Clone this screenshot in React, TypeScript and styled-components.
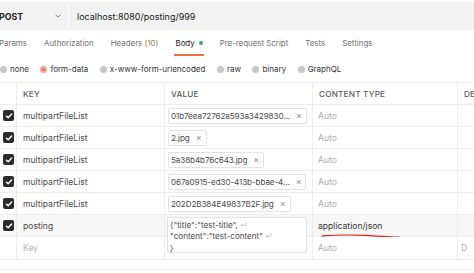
import React from "react"
import styled, { createGlobalStyle } from "styled-components"

const GlobalStyle = createGlobalStyle`
  html, body {
    margin: 0;
    padding: 0;
    background: #ffffff;
  }
  body {
    font-family: Inter, "Noto Sans", sans-serif;
    color: #212121;
    overflow: hidden;
  }
`

type Row = {
  key: string
  value?: string
  file?: boolean
  json?: string[]
  contentType?: string
  highlight?: boolean
}

const rows: Row[] = [
  { key: "multipartFileList", value: "01b7eea72762a593a3429830...", file: true },
  { key: "multipartFileList", value: "2.jpg", file: true },
  { key: "multipartFileList", value: "5a38b4b76c643.jpg", file: true },
  { key: "multipartFileList", value: "067a0915-ed30-413b-bbae-4...", file: true },
  { key: "multipartFileList", value: "202D2B384E49837B2F.jpg", file: true },
  {
    key: "posting",
    json: ['{"title":"test-title",', '"content":"test-content"', "}"],
    contentType: "application/json",
    highlight: true,
  },
]

const tabs = [
  { label: "Params" },
  { label: "Authorization" },
  { label: "Headers", count: "(10)" },
  { label: "Body", active: true },
  { label: "Pre-request Script" },
  { label: "Tests" },
  { label: "Settings" },
]

const bodyTypes = ["none", "form-data", "x-www-form-urlencoded", "raw", "binary", "GraphQL"]

const Check = () => (
  <CheckBox>
    <svg width="8" height="8" viewBox="0 0 10 10">
      <path d="M1.8 5.2 L4 7.3 L8.3 2.6" fill="none" stroke="#fff" strokeWidth="1.8" strokeLinecap="round" strokeLinejoin="round" />
    </svg>
  </CheckBox>
)

const App = () => {
  return (
    <Page>
      <GlobalStyle />
      <UrlBar>
        <Method>
          POST
          <svg width="8" height="8" viewBox="0 0 10 10">
            <path d="M2 3.5 L5 6.5 L8 3.5" fill="none" stroke="#6b6b6b" strokeWidth="1.1" />
          </svg>
        </Method>
        <Url>localhost:8080/posting/999</Url>
      </UrlBar>

      <Tabs>
        {tabs.map(tab => (
          <Tab key={tab.label} active={tab.active}>
            {tab.label}
            {tab.count && <Count> {tab.count}</Count>}
            {tab.active && <Dot />}
          </Tab>
        ))}
      </Tabs>

      <Radios>
        {bodyTypes.map(type => (
          <RadioItem key={type}>
            <Radio selected={type === "form-data"} />
            {type}
          </RadioItem>
        ))}
      </Radios>

      <Table>
        <HeaderRow>
          <Cell />
          <HeadCell>KEY</HeadCell>
          <HeadCell>VALUE</HeadCell>
          <HeadCell>CONTENT TYPE</HeadCell>
          <HeadCell>DE</HeadCell>
        </HeaderRow>
        {rows.map((row, i) => (
          <TableRow key={i} highlight={row.highlight}>
            <Cell>
              <Check />
            </Cell>
            <KeyCell>{row.key}</KeyCell>
            <ValueCell>
              {row.file && (
                <FileChip>
                  {row.value}
                  <Remove>×</Remove>
                </FileChip>
              )}
              {row.json && (
                <JsonBox>
                  {row.json.map((line, n) => (
                    <div key={line}>
                      {line}
                      {n < row.json!.length - 1 && <NewLine> ↵</NewLine>}
                    </div>
                  ))}
                </JsonBox>
              )}
            </ValueCell>
            <TypeCell muted={!row.contentType}>
              {row.contentType || "Auto"}
              {row.contentType && (
                <Scribble width="80" height="8" viewBox="0 0 80 8">
                  <path d="M1 3.8 C 12 3, 30 2.8, 45 3.4 S 70 5.4, 78 5" fill="none" stroke="#e0201b" strokeWidth="1.2" strokeLinecap="round" />
                </Scribble>
              )}
            </TypeCell>
            <Cell />
          </TableRow>
        ))}
        <TableRow>
          <Cell />
          <KeyCell muted>Key</KeyCell>
          <ValueCell />
          <TypeCell muted>Auto</TypeCell>
          <DescCell>D</DescCell>
        </TableRow>
      </Table>
      <Footer />
    </Page>
  )
}

const Page = styled.div`
  width: 474px;
  height: 273px;
  overflow: hidden;
  font-size: 8.6px;
`
const UrlBar = styled.div`
  display: flex;
  align-items: center;
  height: 28px;
  background: #f2f2f2;
  margin-top: 2px;
`
const Method = styled.div`
  width: 70px;
  box-sizing: border-box;
  display: flex;
  align-items: center;
  justify-content: space-between;
  padding: 0 6px 0 0;
  margin-left: -1px;
  font-weight: 700;
  font-size: 8.8px;
  color: #212121;
  height: 100%;
  border-right: 1px solid #ffffff;
`
const Url = styled.div`
  padding-left: 8px;
  font-size: 9px;
  color: #212121;
`
const Tabs = styled.div`
  display: flex;
  align-items: stretch;
  gap: 15px;
  height: 26px;
  margin-left: -2px;
`
const Tab = styled.div<{ active?: boolean }>`
  display: flex;
  align-items: center;
  padding: 0 1px;
  margin-top: 2px;
  color: ${p => (p.active ? "#212121" : "#707070")};
  border-bottom: 2px solid ${p => (p.active ? "#f26b3a" : "transparent")};
  font-size: 7.9px;
`
const Count = styled.span`
  color: #8f8a3f;
  white-space: pre;
`
const Dot = styled.span`
  width: 4px;
  height: 4px;
  border-radius: 50%;
  background: #26b561;
  margin-left: 4px;
`
const Radios = styled.div`
  display: flex;
  align-items: center;
  gap: 11.5px;
  height: 26px;
  padding-left: 0;
`
const RadioItem = styled.div`
  display: flex;
  align-items: center;
  gap: 3px;
  color: #333333;
  font-size: 8px;
`
const Radio = styled.span<{ selected?: boolean }>`
  width: 7px;
  height: 7px;
  border-radius: 50%;
  background: ${p => (p.selected ? "#e57a60" : "#c7c7c7")};
  box-shadow: ${p => (p.selected ? "inset 0 0 0 1.5px #f0b9a9" : "none")};
`
const Table = styled.div`
  border-top: 1px solid #ececec;
  border-bottom: 1px solid #ececec;
`
const rowGrid = `
  display: grid;
  grid-template-columns: 17px 148px 148px 145px 1fr;
  height: 22px;
  border-bottom: 1px solid #ededed;
  box-sizing: border-box;
  &:last-child { border-bottom: none; }
`
const HeaderRow = styled.div`
  ${rowGrid}
  color: #5c5c5c;
  font-size: 8.2px;
  font-weight: 500;
`
const TableRow = styled.div<{ highlight?: boolean }>`
  ${rowGrid}
  background: ${p => (p.highlight ? "#f7f7f7" : "#ffffff")};
  position: relative;
`
const Cell = styled.div`
  display: flex;
  align-items: center;
  border-right: 1px solid #ededed;
  padding-left: 6px;
  min-width: 0;
  white-space: nowrap;
  &:first-child { padding-left: 3px; }
  &:last-child { border-right: none; }
`
const HeadCell = styled(Cell)`
  letter-spacing: 0.2px;
`
const KeyCell = styled(Cell)<{ muted?: boolean }>`
  color: ${p => (p.muted ? "#b3b3b3" : "#4a4a4a")};
`
const ValueCell = styled(Cell)`
  padding-left: 3px;
  position: relative;
  overflow: visible;
`
const TypeCell = styled(Cell)<{ muted?: boolean }>`
  color: ${p => (p.muted ? "#acacac" : "#333333")};
  padding-left: 5px;
  position: relative;
`
const DescCell = styled(Cell)`
  color: #b3b3b3;
  padding-left: 3px;
`
const CheckBox = styled.span`
  width: 11px;
  height: 11px;
  border-radius: 2px;
  background: #2b2b2b;
  display: flex;
  align-items: center;
  justify-content: center;
`
const FileChip = styled.div`
  display: flex;
  align-items: center;
  gap: 6px;
  height: 16px;
  max-width: 141px;
  box-sizing: border-box;
  padding: 0 4px 0 2px;
  border: 1px solid #e2e2e2;
  border-radius: 2px;
  background: #ffffff;
  color: #4a4a4a;
  font-size: 8.1px;
  letter-spacing: -0.1px;
`
const Remove = styled.span`
  color: #8a8a8a;
  font-size: 9px;
  margin-left: auto;
`
const JsonBox = styled.div`
  position: absolute;
  top: 2px;
  left: 2px;
  width: 140px;
  height: 36px;
  box-sizing: border-box;
  padding: 2px 2px;
  border: 1px solid #e2e2e2;
  border-radius: 2px;
  background: #ffffff;
  z-index: 2;
  color: #4a4a4a;
  font-size: 8.1px;
  line-height: 10.4px;
`
const NewLine = styled.span`
  color: #b0b0b0;
  font-size: 7px;
`
const Scribble = styled.svg`
  position: absolute;
  left: 8px;
  top: 17px;
`
const Footer = styled.div`
  height: 9px;
  border-bottom: 1px solid #f1f1f1;
`

export default App
